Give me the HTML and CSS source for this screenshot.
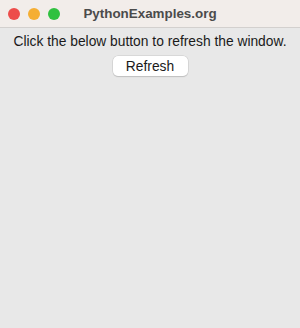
FILE: index.html
```html
<!DOCTYPE html>
<html>
<head>
<meta charset="utf-8">
<link rel="stylesheet" href="styles.css">
</head>
<body>
<div class="window">
  <div class="titlebar">
    <div class="lights">
      <span class="light red"></span>
      <span class="light yellow"></span>
      <span class="light green"></span>
    </div>
    <div class="title">PythonExamples.org</div>
  </div>
  <div class="content">
    <div class="label">Click the below button to refresh the window.</div>
    <button class="btn">Refresh</button>
  </div>
</div>
</body>
</html>
```
FILE: styles.css
```css
html, body {
  margin: 0;
  padding: 0;
  width: 300px;
  height: 328px;
  overflow: hidden;
  font-family: "Liberation Sans", Arial, sans-serif;
}
.window {
  width: 300px;
  height: 328px;
  background: #e8e8e8;
  display: flex;
  flex-direction: column;
}
.titlebar {
  height: 27px;
  background: #f2edea;
  border-bottom: 1px solid #d3d0ce;
  position: relative;
  display: flex;
  align-items: center;
  justify-content: center;
}
.lights {
  position: absolute;
  left: 8px;
  top: 8px;
  display: flex;
  gap: 8px;
}
.light {
  width: 12px;
  height: 12px;
  border-radius: 50%;
  display: block;
}
.red { background: #ed4d4b; }
.yellow { background: #f5ae33; }
.green { background: #30c140; }
.title {
  font-weight: bold;
  font-size: 13.4px;
  color: #4b4b4b;
}
.content {
  display: flex;
  flex-direction: column;
  align-items: center;
  padding-top: 5px;
}
.label {
  font-size: 13.8px;
  color: #1a1a1a;
  line-height: 17px;
}
.btn {
  margin-top: 6px;
  width: 75px;
  height: 20px;
  background: #ffffff;
  border: none;
  border-radius: 5px;
  box-shadow: 0 0 0 0.5px #c8c8c8, 0 1px 1px rgba(0,0,0,0.2);
  font-family: "Liberation Sans", Arial, sans-serif;
  font-size: 13.8px;
  color: #1a1a1a;
  padding: 0;
}
```
